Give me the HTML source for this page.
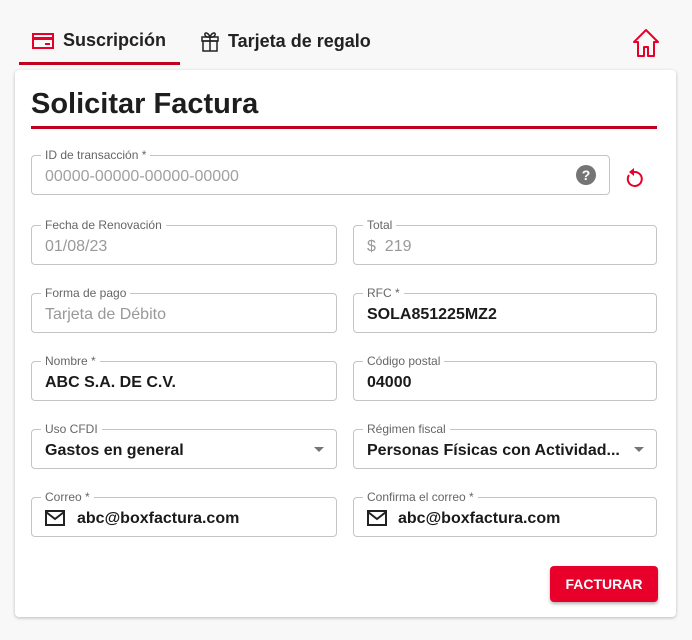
<!DOCTYPE html>
<html><head><meta charset="utf-8"><style>
*{box-sizing:border-box;margin:0;padding:0}
body{width:692px;height:640px;background:#f8f8f8;font-family:"Liberation Sans",Arial,sans-serif;position:relative;overflow:hidden;color:#1a1a1a}
.tab{position:absolute;top:30px;font-size:18px;font-weight:bold;color:#222;display:flex;align-items:center;gap:8px}
.ul{position:absolute;left:19px;top:62px;width:161px;height:3px;background:#c0001e}
.card{position:absolute;left:15px;top:70px;width:661px;height:547px;background:#fff;border-radius:4px;box-shadow:0 1px 3px rgba(0,0,0,.25)}
h1{position:absolute;left:31px;top:88px;font-size:29px;font-weight:bold;color:#1e1e1e}
.rl{position:absolute;left:31px;top:126px;width:626px;height:3px;background:#c0001e}
.f{position:absolute;height:40px;border:1px solid #c4c4c4;border-radius:4px;font-size:16px;display:flex;align-items:center;padding-left:13px;padding-top:3px}
.f label{position:absolute;top:-8px;left:9px;background:#fff;padding:0 4px;font-size:12px;color:#666;line-height:14px}
.g{color:#999}
.b{font-weight:bold;color:#1a1a1a}
.arr{position:absolute;right:12px;top:17px;border-left:5px solid transparent;border-right:5px solid transparent;border-top:5px solid #757575}
.L{left:31px;width:306px}.R{left:353px;width:304px}
.btn{position:absolute;left:550px;top:566px;width:108px;height:36px;background:#e8002a;border-radius:4px;color:#fff;font-weight:bold;font-size:14px;display:flex;align-items:center;justify-content:center;box-shadow:0 2px 3px rgba(0,0,0,.3)}
</style></head><body>
<div class="tab" style="left:32px"><svg width="22" height="16" viewBox="0 0 22 16"><rect x="1" y="1" width="20" height="14" fill="none" stroke="#e8002a" stroke-width="2"/><rect x="1" y="4" width="20" height="3" fill="#e8002a"/><rect x="13" y="10" width="5" height="2" fill="#e8002a"/></svg><span style="margin-left:1px">Suscripción</span></div>
<div class="tab" style="left:200px"><svg width="20" height="22" viewBox="0 0 20 22"><g fill="none" stroke="#222" stroke-width="1.5"><rect x="2" y="7" width="16" height="4"/><rect x="3" y="11" width="14" height="10"/><path d="M10 7v14M10 7C8 2 4 2 5 5s5 2 5 2M10 7c2-5 6-5 5-2s-5 2-5 2"/></g></svg>Tarjeta de regalo</div>
<svg style="position:absolute;left:632px;top:28px" width="28" height="30" viewBox="0 0 28 30"><path d="M14 2 L2 14 H6 V28 H12 V19 H16 V28 H22 V14 H26 Z" fill="none" stroke="#e8002a" stroke-width="2" stroke-linejoin="round"/></svg>
<div class="ul"></div>
<div class="card"></div>
<h1>Solicitar Factura</h1>
<div class="rl"></div>
<div class="f" style="left:31px;top:155px;width:579px"><label>ID de transacción *</label><span class="g" style="color:#a0a0a0">00000-00000-00000-00000</span>
<svg style="position:absolute;right:13px;top:9px" width="20" height="20" viewBox="0 0 20 20"><circle cx="10" cy="10" r="10" fill="#757575"/><text x="10" y="15" text-anchor="middle" font-family="Liberation Sans" font-weight="bold" font-size="14" fill="#fff">?</text></svg></div>
<svg style="position:absolute;left:623px;top:165px" width="22" height="24" viewBox="0 0 22 24"><path d="M6 10 A7 7 0 1 0 11 7" fill="none" stroke="#e8002a" stroke-width="2"/><path d="M11 3 L11 11 L6 7 Z" fill="#e8002a"/></svg>
<div class="f L" style="top:225px"><label>Fecha de Renovación</label><span class="g">01/08/23</span></div>
<div class="f R" style="top:225px"><label>Total</label><span class="g">$&nbsp; 219</span></div>
<div class="f L" style="top:293px"><label>Forma de pago</label><span class="g">Tarjeta de Débito</span></div>
<div class="f R" style="top:293px"><label>RFC *</label><span class="b">SOLA851225MZ2</span></div>
<div class="f L" style="top:361px"><label>Nombre *</label><span class="b">ABC S.A. DE C.V.</span></div>
<div class="f R" style="top:361px"><label>Código postal</label><span class="b">04000</span></div>
<div class="f L" style="top:429px"><label>Uso CFDI</label><span class="b">Gastos en general</span><div class="arr"></div></div>
<div class="f R" style="top:429px"><label>Régimen fiscal</label><span class="b">Personas Físicas con Actividad...</span><div class="arr"></div></div>
<div class="f L" style="top:497px"><label>Correo *</label><svg width="20" height="16" viewBox="0 0 20 16" style="margin-right:12px;margin-top:-2px"><rect x="1" y="1" width="18" height="14" fill="none" stroke="#222" stroke-width="2"/><path d="M1 2 L10 9 L19 2" fill="none" stroke="#222" stroke-width="2"/></svg><span class="b">abc@boxfactura.com</span></div>
<div class="f R" style="top:497px"><label>Confirma el correo *</label><svg width="20" height="16" viewBox="0 0 20 16" style="margin-right:11px;margin-top:-2px"><rect x="1" y="1" width="18" height="14" fill="none" stroke="#222" stroke-width="2"/><path d="M1 2 L10 9 L19 2" fill="none" stroke="#222" stroke-width="2"/></svg><span class="b">abc@boxfactura.com</span></div>
<div class="btn">FACTURAR</div>
</body></html>
